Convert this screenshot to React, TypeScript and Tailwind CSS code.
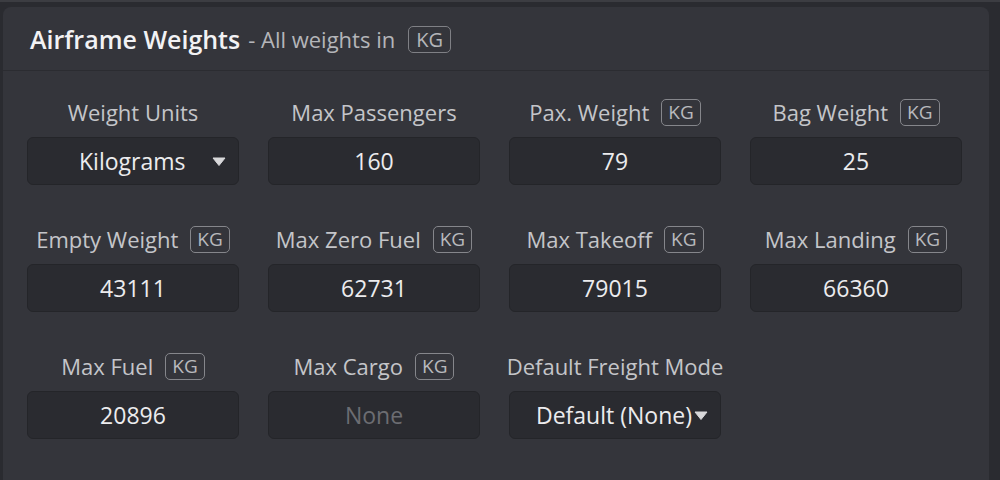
import React from "react";

const Kg = () => (
  <span className="ml-[12px] inline-flex h-[27px] items-center rounded-[5px] border border-[#85868b] px-[6px] text-[19px] leading-none text-[#b8b9bd]">
    KG
  </span>
);

const Caret = () => (
  <svg width="14" height="9" viewBox="0 0 14 9">
    <path d="M1 1 L13 1 L7 8.5 Z" fill="#d8d8da" strokeLinejoin="round" stroke="#d8d8da" strokeWidth="1" />
  </svg>
);

type Field = {
  label: string;
  kg?: boolean;
  value: string;
  kind?: "select" | "none" | "select2";
};

const rows: Field[][] = [
  [
    { label: "Weight Units", value: "Kilograms", kind: "select" },
    { label: "Max Passengers", value: "160" },
    { label: "Pax. Weight", kg: true, value: "79" },
    { label: "Bag Weight", kg: true, value: "25" },
  ],
  [
    { label: "Empty Weight", kg: true, value: "43111" },
    { label: "Max Zero Fuel", kg: true, value: "62731" },
    { label: "Max Takeoff", kg: true, value: "79015" },
    { label: "Max Landing", kg: true, value: "66360" },
  ],
  [
    { label: "Max Fuel", kg: true, value: "20896" },
    { label: "Max Cargo", kg: true, value: "None", kind: "none" },
    { label: "Default Freight Mode", value: "Default (None)", kind: "select2" },
  ],
];

function FieldBox({ f }: { f: Field }) {
  return (
    <div className="flex flex-col items-center">
      <div className="flex h-[30px] items-center whitespace-nowrap text-[22px] text-[#c4c5c9]">
        <span>{f.label}</span>
        {f.kg && <Kg />}
      </div>
      <div className="mt-[10px] flex h-[48px] w-[212px] items-center justify-center rounded-[6px] border border-[#242529] bg-[#2a2b30] text-[23px]">
        {f.kind === "select" ? (
          <div className="flex w-full items-center pl-[51px]">
            <span className="text-[#ececee]">{f.value}</span>
            <span className="ml-[27px] flex">
              <Caret />
            </span>
          </div>
        ) : f.kind === "select2" ? (
          <div className="flex w-full items-center whitespace-nowrap pl-[26px]">
            <span className="text-[#ececee]">{f.value}</span>
            <span className="ml-[2px] flex">
              <Caret />
            </span>
          </div>
        ) : f.kind === "none" ? (
          <span className="text-[#6c6d72]">{f.value}</span>
        ) : (
          <span className="text-[#ececee]">{f.value}</span>
        )}
      </div>
    </div>
  );
}

export default function App() {
  return (
    <div
      className="flex h-[480px] w-[1000px] flex-col overflow-hidden border-t-[2px] border-[#3c3d42] bg-[#2a2b30]"
      style={{ fontFamily: '"Open Sans", "Noto Sans", sans-serif' }}
    >
      <div className="h-[5px] shrink-0" />
      <div className="ml-[3px] mr-[11px] flex flex-1 flex-col rounded-t-[8px] bg-[#34353b]">
        <div className="flex h-[64px] items-center border-b border-[#2b2c31] pl-[27px] pt-[2px]">
          <span className="text-[25px] font-semibold text-[#f2f2f4]">Airframe Weights</span>
          <span className="ml-[8px] text-[22px] text-[#b4b5b9]">- All weights in</span>
          <span className="ml-[13px] inline-flex h-[27px] items-center rounded-[5px] border border-[#7f8085] px-[7px] text-[20px] leading-none text-[#b4b5b9]">
            KG
          </span>
        </div>
        <div className="flex flex-col gap-[39px] pl-[24px] pt-[26px]">
          {rows.map((r, i) => (
            <div key={i} className="grid grid-cols-[212px_212px_212px_212px] gap-x-[29px]">
              {r.map((f) => (
                <FieldBox key={f.label} f={f} />
              ))}
            </div>
          ))}
        </div>
      </div>
    </div>
  );
}
